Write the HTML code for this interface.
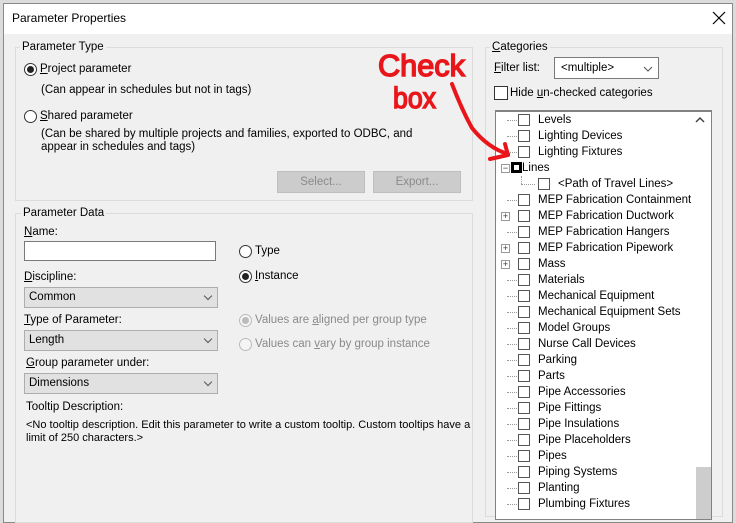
<!DOCTYPE html>
<html><head><meta charset="utf-8"><style>
*{margin:0;padding:0;box-sizing:border-box}
body{width:736px;height:507px;overflow:hidden;background:#dcdcdc;font-family:"Liberation Sans",sans-serif;font-size:11.5px;line-height:17px;color:#000;position:relative}
.a{position:absolute;white-space:nowrap}
.win{position:absolute;left:3px;top:3px;width:730px;height:520px;background:#f0f0f0;border:1px solid #888}
.title{position:absolute;left:0;top:0;width:100%;height:30px;background:#fff}
.grp{position:absolute;border:1px solid #dcdcdc}
.lg{position:absolute;background:#f0f0f0;padding:0 2px;line-height:15px}
.rad{position:absolute;width:13px;height:13px;border:1px solid #333;border-radius:50%;background:#fff}
.rad.on::after{content:"";position:absolute;left:2px;top:2px;width:7px;height:7px;border-radius:50%;background:#222}
.rad.dis{border-color:#bbb;background:#f4f4f4}
.rad.dis.on::after{background:#bbb}
.btn{position:absolute;border:1px solid #bfbfbf;background:#cccccc;color:#8a8a8a;text-align:center;line-height:20px}
.sel{position:absolute;border:1px solid #adadad;background:#e1e1e1;padding-left:4px;line-height:19px}
.sel::after{content:"";position:absolute;right:6px;top:5px;width:5px;height:5px;border-right:1px solid #555;border-bottom:1px solid #555;transform:rotate(45deg)}
.cb{position:absolute;width:12px;height:12px;border:1px solid #333;background:#fff}
.tree{position:absolute;left:495px;top:110px;width:217px;height:410px;background:#fff;border:1px solid #828282;border-top:2px solid #828282;overflow:hidden}
.row{position:absolute;left:0;height:16px;width:215px;white-space:nowrap}
.row .dl{position:absolute;left:11px;top:8px;width:10px;border-top:1px dotted #999}
.row .c{position:absolute;left:22px;top:2px;width:12px;height:12px;border:1px solid #555;background:#fff}
.row .t{position:absolute;left:42px;top:0}
.pl{position:absolute;left:5px;top:4px;width:9px;height:9px;border:1px solid #999;background:#fff;font-size:9px;line-height:7px;text-align:center;color:#333}
u{text-decoration:underline}
</style></head><body>
<div class="win">
<div class="title"></div>
<div class="a" style="left:8px;top:6px;font-size:12px">Parameter Properties</div>
<svg class="a" style="left:708px;top:7px" width="14" height="14"><path d="M1 1L13 13M13 1L1 13" stroke="#000" stroke-width="1.2"/></svg>
</div>
<div class="grp" style="left:15px;top:47px;width:458px;height:154px"></div>
<div class="lg a" style="left:20px;top:40px">Parameter Type</div>
<div class="rad on" style="left:24px;top:63px"></div>
<div class="a" style="left:40px;top:61px"><u>P</u>roject parameter</div>
<div class="a" style="left:41px;top:82px">(Can appear in schedules but not in tags)</div>
<div class="rad" style="left:24px;top:110px"></div>
<div class="a" style="left:40px;top:108px"><u>S</u>hared parameter</div>
<div class="a" style="left:41px;top:126px">(Can be shared by multiple projects and families, exported to ODBC, and</div>
<div class="a" style="left:41px;top:139px">appear in schedules and tags)</div>
<div class="btn" style="left:277px;top:171px;width:88px;height:22px">Select...</div>
<div class="btn" style="left:373px;top:171px;width:88px;height:22px">Export...</div>
<div class="grp" style="left:15px;top:213px;width:458px;height:310px"></div>
<div class="lg a" style="left:21px;top:206px">Parameter Data</div>
<div class="a" style="left:24px;top:224px"><u>N</u>ame:</div>
<div class="a" style="left:24px;top:241px;width:192px;height:20px;background:#fff;border:1px solid #7a7a7a"></div>
<div class="rad" style="left:239px;top:245px"></div>
<div class="a" style="left:255px;top:243px">Type</div>
<div class="rad on" style="left:239px;top:270px"></div>
<div class="a" style="left:255px;top:268px"><u>I</u>nstance</div>
<div class="a" style="left:24px;top:269px"><u>D</u>iscipline:</div>
<div class="sel" style="left:24px;top:287px;width:194px;height:21px">Common</div>
<div class="a" style="left:24px;top:312px"><u>T</u>ype of Parameter:</div>
<div class="sel" style="left:24px;top:330px;width:194px;height:21px">Length</div>
<div class="rad dis on" style="left:239px;top:314px"></div>
<div class="a" style="left:255px;top:312px;color:#8a8a8a">Values are <u>a</u>ligned per group type</div>
<div class="rad dis" style="left:239px;top:338px"></div>
<div class="a" style="left:255px;top:336px;color:#8a8a8a">Values can <u>v</u>ary by group instance</div>
<div class="a" style="left:26px;top:355px"><u>G</u>roup parameter under:</div>
<div class="sel" style="left:24px;top:373px;width:194px;height:21px">Dimensions</div>
<div class="a" style="left:26px;top:399px">Tooltip Description:</div>
<div class="a" style="left:26px;top:417px;font-size:11px">&lt;No tooltip description. Edit this parameter to write a custom tooltip. Custom tooltips have a</div>
<div class="a" style="left:26px;top:430px;font-size:11px">limit of 250 characters.&gt;</div>
<div class="grp" style="left:485px;top:47px;width:238px;height:470px"></div>
<div class="lg a" style="left:490px;top:40px"><u>C</u>ategories</div>
<div class="a" style="left:494px;top:60px"><u>F</u>ilter list:</div>
<div class="a" style="left:554px;top:57px;width:105px;height:22px;border:1px solid #7a7a7a;background:#fff;padding:2px 0 0 6px">&lt;multiple&gt;<svg style="position:absolute;right:5px;top:8px" width="10" height="6"><path d="M1 1L5 5L9 1" stroke="#555" fill="none"/></svg></div>
<div class="cb" style="left:494px;top:86px;width:14px;height:14px"></div>
<div class="a" style="left:510px;top:85px">Hide <u>u</u>n-checked categories</div>
<div class="tree">
<svg style="position:absolute;left:199px;top:4px" width="10" height="8"><path d="M1 6L5 2L9 6" stroke="#444" stroke-width="1.5" fill="none"/></svg>
<div style="position:absolute;left:200px;top:355px;width:16px;height:60px;background:#cdcdcd"></div>
<div class="row" style="top:0"><div class="dl"></div><div class="c"></div><div class="t">Levels</div></div>
<div class="row" style="top:16px"><div class="dl"></div><div class="c"></div><div class="t">Lighting Devices</div></div>
<div class="row" style="top:32px"><div class="dl"></div><div class="c"></div><div class="t">Lighting Fixtures</div></div>
<div class="row" style="top:48px"><div class="pl">−</div><div style="position:absolute;left:15px;top:2px;width:11px;height:11px;border:3px solid #000;background:#fff"></div><div class="t" style="left:26px">Lines</div></div>
<div class="row" style="top:64px"><div style="position:absolute;left:25px;top:0;height:8px;border-left:1px dotted #999"></div><div style="position:absolute;left:25px;top:8px;width:14px;border-top:1px dotted #999"></div><div class="c" style="left:42px"></div><div class="t" style="left:62px">&lt;Path of Travel Lines&gt;</div></div>
<div class="row" style="top:80px"><div class="dl"></div><div class="c"></div><div class="t">MEP Fabrication Containment</div></div>
<div class="row" style="top:96px"><div class="pl">+</div><div class="c"></div><div class="t">MEP Fabrication Ductwork</div></div>
<div class="row" style="top:112px"><div class="dl"></div><div class="c"></div><div class="t">MEP Fabrication Hangers</div></div>
<div class="row" style="top:128px"><div class="pl">+</div><div class="c"></div><div class="t">MEP Fabrication Pipework</div></div>
<div class="row" style="top:144px"><div class="pl">+</div><div class="c"></div><div class="t">Mass</div></div>
<div class="row" style="top:160px"><div class="dl"></div><div class="c"></div><div class="t">Materials</div></div>
<div class="row" style="top:176px"><div class="dl"></div><div class="c"></div><div class="t">Mechanical Equipment</div></div>
<div class="row" style="top:192px"><div class="dl"></div><div class="c"></div><div class="t">Mechanical Equipment Sets</div></div>
<div class="row" style="top:208px"><div class="dl"></div><div class="c"></div><div class="t">Model Groups</div></div>
<div class="row" style="top:224px"><div class="dl"></div><div class="c"></div><div class="t">Nurse Call Devices</div></div>
<div class="row" style="top:240px"><div class="dl"></div><div class="c"></div><div class="t">Parking</div></div>
<div class="row" style="top:256px"><div class="dl"></div><div class="c"></div><div class="t">Parts</div></div>
<div class="row" style="top:272px"><div class="dl"></div><div class="c"></div><div class="t">Pipe Accessories</div></div>
<div class="row" style="top:288px"><div class="dl"></div><div class="c"></div><div class="t">Pipe Fittings</div></div>
<div class="row" style="top:304px"><div class="dl"></div><div class="c"></div><div class="t">Pipe Insulations</div></div>
<div class="row" style="top:320px"><div class="dl"></div><div class="c"></div><div class="t">Pipe Placeholders</div></div>
<div class="row" style="top:336px"><div class="dl"></div><div class="c"></div><div class="t">Pipes</div></div>
<div class="row" style="top:352px"><div class="dl"></div><div class="c"></div><div class="t">Piping Systems</div></div>
<div class="row" style="top:368px"><div class="dl"></div><div class="c"></div><div class="t">Planting</div></div>
<div class="row" style="top:384px"><div class="dl"></div><div class="c"></div><div class="t">Plumbing Fixtures</div></div>
</div>
<svg class="a" style="left:0;top:0" width="736" height="507">
<text x="378" y="76" font-family="Liberation Sans, sans-serif" font-size="31" fill="#e8161a" stroke="#e8161a" stroke-width="1.5" textLength="87" lengthAdjust="spacingAndGlyphs">Check</text>
<text x="393" y="108" font-family="Liberation Sans, sans-serif" font-size="30" fill="#e8161a" stroke="#e8161a" stroke-width="1.5" textLength="43" lengthAdjust="spacingAndGlyphs">box</text>
<path d="M452 84 Q462 110 472 128 Q488 148 508 154" stroke="#e8161a" stroke-width="4" fill="none" stroke-linecap="round"/>
<path d="M490 159 L508 155 L505 144" stroke="#e8161a" stroke-width="4" fill="none" stroke-linecap="round" stroke-linejoin="round"/>
</svg>
</body></html>
